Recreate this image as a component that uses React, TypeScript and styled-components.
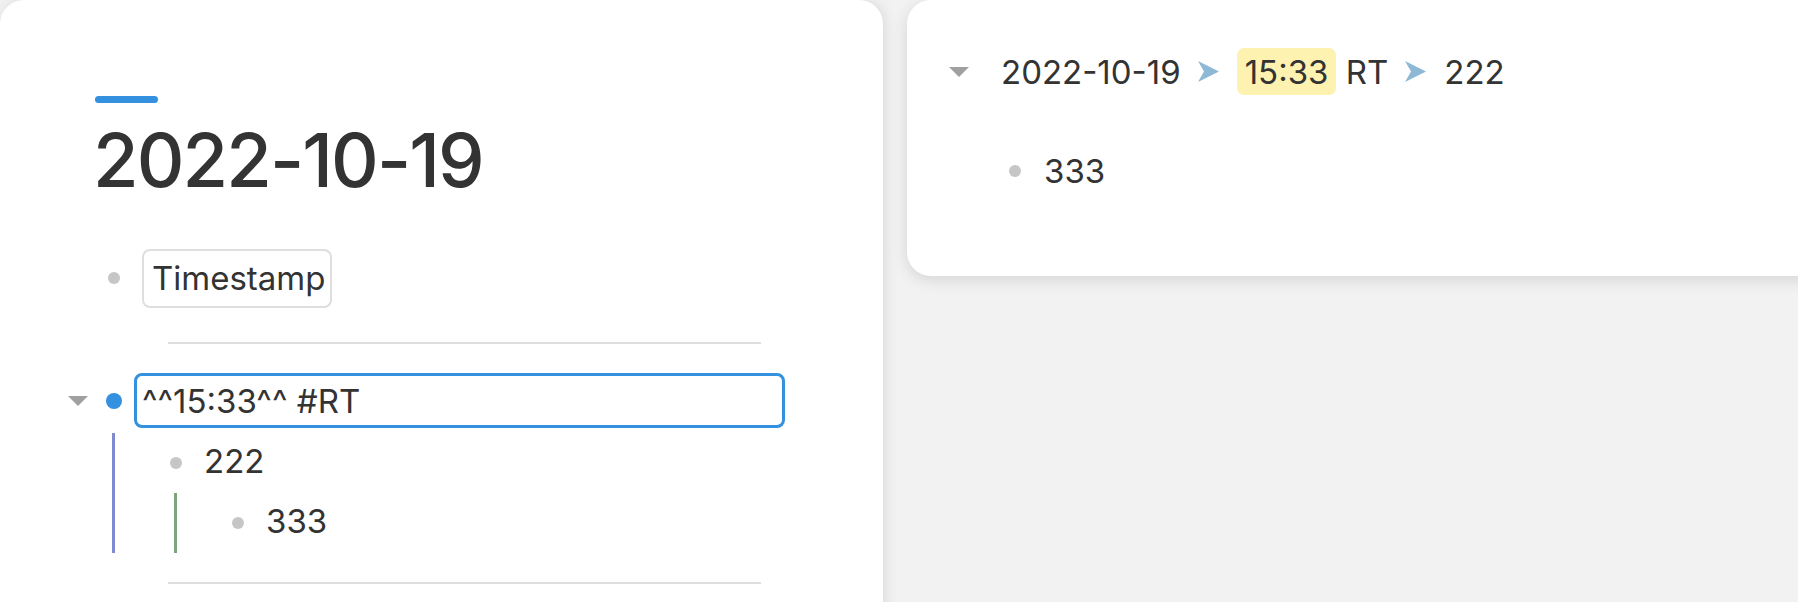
import { createGlobalStyle } from 'styled-components'
import styled from 'styled-components'

const GlobalStyle = createGlobalStyle`
  html, body {
    margin: 0;
    padding: 0;
    background: #f2f2f2;
    overflow: hidden;
  }
  body {
    font-family: Inter, "Noto Sans", "Liberation Sans", sans-serif;
    color: #333333;
  }
`

const Page = styled.div`
  display: flex;
  align-items: flex-start;
  gap: 24px;
  width: 1798px;
  height: 602px;
  overflow: hidden;
`

const LeftCard = styled.section`
  flex: none;
  width: 883px;
  height: 660px;
  padding-top: 96px;
  box-sizing: border-box;
  background: #ffffff;
  border-radius: 24px 24px 0 0;
  box-shadow: 2px 0 14px rgba(0, 0, 0, 0.1);
`

const RightCard = styled.section`
  flex: none;
  width: 960px;
  height: 276px;
  box-sizing: border-box;
  padding: 48px 0 0 34px;
  background: #ffffff;
  border-radius: 24px 0 0 24px;
  box-shadow: 0 4px 16px rgba(0, 0, 0, 0.12);
`

const TitleMark = styled.div`
  margin-left: 95px;
  width: 63px;
  height: 7px;
  border-radius: 4px;
  background: #3391e0;
`

const Title = styled.h1`
  margin: 20px 0 0 93px;
  font-size: 74px;
  line-height: 74px;
  font-weight: 500;
  letter-spacing: -1.9px;
  color: #333333;
`

const Blocks = styled.div<{ $top?: number }>`
  display: flex;
  flex-direction: column;
  margin-top: ${(p) => p.$top ?? 0}px;
  padding-left: 60px;
`

const Row = styled.div<{ $h?: number; $gap?: number }>`
  display: flex;
  align-items: stretch;
  height: ${(p) => p.$h ?? 60}px;
  margin-bottom: ${(p) => p.$gap ?? 0}px;
`

const CaretSlot = styled.div`
  flex: none;
  width: 36px;
  display: flex;
  align-items: center;
  justify-content: center;
`

const Caret = styled.span`
  width: 0;
  height: 0;
  border-left: 10px solid transparent;
  border-right: 10px solid transparent;
  border-top: 10px solid #a0a0a0;
`

const BulletSlot = styled.div`
  flex: none;
  width: 36px;
  display: flex;
  align-items: center;
  justify-content: center;
`

const Bullet = styled.span<{ $active?: boolean }>`
  width: ${(p) => (p.$active ? 16 : 12)}px;
  height: ${(p) => (p.$active ? 16 : 12)}px;
  border-radius: 50%;
  background: ${(p) => (p.$active ? '#3391e0' : '#c6c6c6')};
`

const Content = styled.div<{ $lift?: number }>`
  flex: 1;
  display: flex;
  align-items: center;
  margin-left: 10px;
  padding-bottom: ${(p) => p.$lift ?? 0}px;
  font-size: 33px;
  line-height: 56px;
  color: #333333;
`

const ButtonChip = styled.span`
  display: inline-flex;
  align-items: center;
  height: 59px;
  box-sizing: border-box;
  padding: 0 5px 0 8px;
  border: 2px solid #dedede;
  border-radius: 8px;
  font-size: 33px;
`

const EditBox = styled.div`
  flex: none;
  width: 651px;
  height: 55px;
  box-sizing: border-box;
  margin-left: 2px;
  padding-left: 5px;
  display: flex;
  align-items: center;
  border: 3px solid #3391e0;
  border-radius: 8px;
  font-size: 33px;
  color: #333333;
`

const Children = styled.div<{ $color: string }>`
  display: flex;
  flex-direction: column;
  margin-left: 52px;
  padding-left: 7px;
  border-left: 3px solid ${(p) => p.$color};
`

const Separator = styled.hr<{ $top: number }>`
  margin: ${(p) => p.$top}px 0 0 168px;
  width: 593px;
  height: 2px;
  border: none;
  background: #dddddd;
`

const Breadcrumb = styled.div`
  display: flex;
  align-items: center;
  height: 47px;
  font-size: 33px;
  color: #333333;
`

const Crumb = styled.span<{ $lead?: number }>`
  white-space: pre;
  margin-left: ${(p) => p.$lead ?? 0}px;
`

const Highlight = styled.span`
  display: inline-flex;
  align-items: center;
  height: 47px;
  padding: 0 8px;
  border-radius: 7px;
  background: #fdf2b0;
`

const ArrowWrap = styled.span`
  display: inline-flex;
  margin: 0 18px 0 17px;
`

const Arrow = () => (
  <ArrowWrap>
    <svg width="21" height="21" viewBox="0 0 21 21">
      <polygon points="0,0 21,10.5 0,21 6,10.5" fill="#8db8d6" />
    </svg>
  </ArrowWrap>
)

const RefChild = styled.div`
  display: flex;
  align-items: center;
  height: 60px;
  margin-top: 46px;
  padding-left: 68px;
  font-size: 33px;
`

const RefBullet = styled.span`
  width: 12px;
  height: 12px;
  border-radius: 50%;
  background: #c6c6c6;
  margin-right: 23px;
`

const App = () => {
  return (
    <>
      <GlobalStyle />
      <Page>
        <LeftCard>
          <TitleMark />
          <Title>2022-10-19</Title>
          <Blocks $top={51}>
            <Row>
              <CaretSlot />
              <BulletSlot>
                <Bullet />
              </BulletSlot>
              <Content>
                <ButtonChip>Timestamp</ButtonChip>
              </Content>
            </Row>
          </Blocks>
          <Separator $top={34} />
          <Blocks $top={29}>
            <Row $h={55} $gap={5}>
              <CaretSlot>
                <Caret />
              </CaretSlot>
              <BulletSlot>
                <Bullet $active />
              </BulletSlot>
              <EditBox>^^15:33^^ #RT</EditBox>
            </Row>
            <Children $color="#7f8ad0">
              <Row>
                <CaretSlot />
                <BulletSlot>
                  <Bullet />
                </BulletSlot>
                <Content $lift={4}>222</Content>
              </Row>
              <Children $color="#7aa67c">
                <Row>
                  <CaretSlot />
                  <BulletSlot>
                    <Bullet />
                  </BulletSlot>
                  <Content $lift={4}>333</Content>
                </Row>
              </Children>
            </Children>
          </Blocks>
          <Separator $top={29} />
        </LeftCard>
        <RightCard>
          <Breadcrumb>
            <CaretSlot>
              <Caret />
            </CaretSlot>
            <Crumb $lead={24}>2022-10-19</Crumb>
            <Arrow />
            <Highlight>15:33</Highlight>
            <Crumb> RT</Crumb>
            <Arrow />
            <Crumb>222</Crumb>
          </Breadcrumb>
          <RefChild>
            <RefBullet />
            333
          </RefChild>
        </RightCard>
      </Page>
    </>
  )
}

export default App
